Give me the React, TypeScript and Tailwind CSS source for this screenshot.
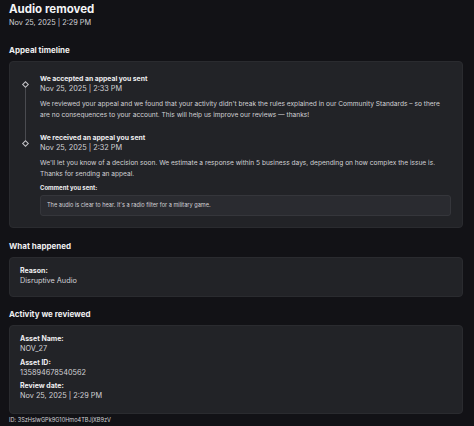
import React from 'react';

const events = [
  {
    title: 'We accepted an appeal you sent',
    date: 'Nov 25, 2025 | 2:33 PM',
    body: "We reviewed your appeal and we found that your activity didn't break the rules explained in our Community Standards – so there are no consequences to your account. This will help us improve our reviews — thanks!",
  },
  {
    title: 'We received an appeal you sent',
    date: 'Nov 25, 2025 | 2:32 PM',
    body: "We'll let you know of a decision soon. We estimate a response within 5 business days, depending on how complex the issue is. Thanks for sending an appeal.",
    comment: "The audio is clear to hear. It's a radio filter for a military game.",
  },
];

const assetFields = [
  { label: 'Asset Name:', value: 'NOV_27' },
  { label: 'Asset ID:', value: '135894678540562' },
  { label: 'Review date:', value: 'Nov 25, 2025 | 2:29 PM' },
];

function SectionTitle({ children }: { children: React.ReactNode }) {
  return <h2 className="text-[8px] leading-[12px] font-bold text-[#eeeef0]">{children}</h2>;
}

function Field({ label, value }: { label: string; value: string }) {
  return (
    <div>
      <div className="text-[7px] leading-[10px] font-bold text-[#eeeef0]">{label}</div>
      <div className="text-[7.3px] leading-[10px] text-[#d2d2d6]">{value}</div>
    </div>
  );
}

export default function App() {
  return (
    <div
      className="min-h-[426px] w-full bg-[#121216] pl-[9px] pr-[11px] text-white"
      style={{ fontFamily: 'Inter, "Noto Sans", sans-serif' }}
    >
      <h1 className="text-[11.5px] leading-[18px] font-bold text-[#f4f4f6]">Audio removed</h1>
      <div className="text-[7.3px] leading-[10px] text-[#d2d2d6]">Nov 25, 2025 | 2:29 PM</div>

      <div className="mt-[16px]">
        <SectionTitle>Appeal timeline</SectionTitle>
      </div>
      <div className="mt-[5px] rounded-[4px] border border-[#2a2b2f] bg-[#222327] pt-[12px] pr-[11px] pb-[11px]">
        {events.map((ev, i) => (
          <div key={ev.title} className="flex">
            <div className="flex w-[30px] shrink-0 flex-col items-center">
              <div className={`h-[8px] w-px ${i > 0 ? 'bg-[#4a4b50]' : ''}`} />
              <div className="h-[5px] w-[5px] rotate-45 border border-[#c4c4c8] bg-[#222327]" />
              <div className={`w-px flex-1 ${i < events.length - 1 ? 'bg-[#4a4b50]' : ''}`} />
            </div>
            <div className={`min-w-0 flex-1 ${i < events.length - 1 ? 'pb-[12px]' : ''}`}>
              <div className="text-[6.8px] leading-[10px] font-bold text-[#f0f0f2]">{ev.title}</div>
              <div className="text-[7.3px] leading-[10px] text-[#d2d2d6]">{ev.date}</div>
              <p className="mt-[5px] text-[6.6px] leading-[11px] text-[#d2d2d6]">{ev.body}</p>
              {ev.comment && (
                <>
                  <div className="mt-[3px] text-[6px] leading-[10px] font-bold text-[#eeeef0]">Comment you sent:</div>
                  <div className="mt-[2px] flex h-[21px] items-center rounded-[3px] border border-[#35363b] bg-[#2a2b30] px-[6px] text-[5.6px] text-[#d2d2d6]">
                    {ev.comment}
                  </div>
                </>
              )}
            </div>
          </div>
        ))}
      </div>

      <div className="mt-[12px]">
        <SectionTitle>What happened</SectionTitle>
      </div>
      <div className="mt-[5px] rounded-[4px] border border-[#2a2b2f] bg-[#222327] px-[10px] pt-[8px] pb-[10px]">
        <Field label="Reason:" value="Disruptive Audio" />
      </div>

      <div className="mt-[11px]">
        <SectionTitle>Activity we reviewed</SectionTitle>
      </div>
      <div className="mt-[5px] flex flex-col gap-[3.5px] rounded-[4px] border border-[#2a2b2f] bg-[#222327] px-[10px] pt-[8px] pb-[12px]">
        {assetFields.map((f) => (
          <Field key={f.label} label={f.label} value={f.value} />
        ))}
      </div>

      <div className="mt-[1px] text-[5.6px] leading-[10px] text-[#d2d2d6]">ID: 3SzHslwGPk9G10Hmo4TBJjXB9zV</div>
    </div>
  );
}
